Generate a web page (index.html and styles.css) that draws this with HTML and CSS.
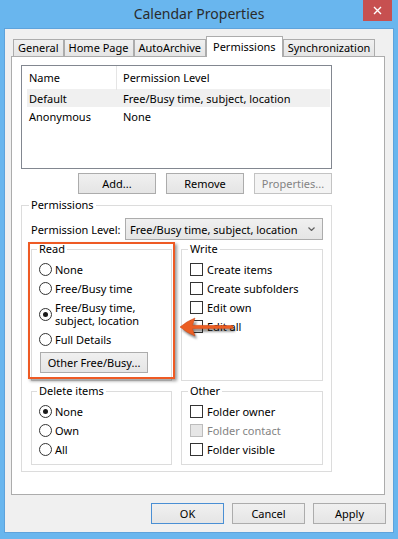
FILE: index.html
```html
<!DOCTYPE html>
<html>
<head>
<meta charset="utf-8">
<title>Calendar Properties</title>
<link rel="stylesheet" href="styles.css">
</head>
<body>
<div class="window">
  <div class="titlebar">
    <div class="title">Calendar Properties</div>
    <div class="close">
      <svg width="9" height="9" viewBox="0 0 9 9"><path d="M1 1 L8 8 M8 1 L1 8" stroke="#fff" stroke-width="1.4" fill="none"/></svg>
    </div>
  </div>
  <div class="client">
    <div class="tabs">
      <div class="tab">General</div>
      <div class="tab">Home Page</div>
      <div class="tab">AutoArchive</div>
      <div class="tab active">Permissions</div>
      <div class="tab">Synchronization</div>
    </div>
    <div class="panel">
      <div class="list">
        <div class="list-head"><div class="c1">Name</div><div class="c2">Permission Level</div></div>
        <div class="list-row selected"><div class="c1">Default</div><div class="c2">Free/Busy time, subject, location</div></div>
        <div class="list-row"><div class="c1">Anonymous</div><div class="c2">None</div></div>
      </div>
      <div class="list-buttons">
        <button class="btn">Add...</button>
        <button class="btn">Remove</button>
        <button class="btn disabled">Properties...</button>
      </div>
      <fieldset class="group perms">
        <legend>Permissions</legend>
        <div class="level-row">
          <div class="level-label">Permission Level:</div>
          <div class="select">
            <span>Free/Busy time, subject, location</span>
            <svg width="7" height="4" viewBox="0 0 7 4"><path d="M0.5 0.5 L3.5 3.5 L6.5 0.5" stroke="#606060" stroke-width="1.2" fill="none"/></svg>
          </div>
        </div>
        <div class="groups">
          <div class="read-wrap">
            <fieldset class="group sub read">
              <legend>Read</legend>
              <div class="items">
                <div class="opt"><span class="radio"></span><span>None</span></div>
                <div class="opt"><span class="radio"></span><span>Free/Busy time</span></div>
                <div class="opt"><span class="radio on"></span><span>Free/Busy time,<br>subject, location</span></div>
                <div class="opt"><span class="radio"></span><span>Full Details</span></div>
                <button class="btn other-btn">Other Free/Busy...</button>
              </div>
            </fieldset>
            <div class="highlight"></div>
          </div>
          <fieldset class="group sub write">
            <legend>Write</legend>
            <div class="items">
              <div class="opt chk"><span class="box"></span><span>Create items</span></div>
              <div class="opt chk"><span class="box"></span><span>Create subfolders</span></div>
              <div class="opt chk"><span class="box"></span><span>Edit own</span></div>
              <div class="opt chk"><span class="box"></span><span>Edit all</span></div>
            </div>
          </fieldset>
          <fieldset class="group sub delete">
            <legend>Delete items</legend>
            <div class="items">
              <div class="opt"><span class="radio on"></span><span>None</span></div>
              <div class="opt"><span class="radio"></span><span>Own</span></div>
              <div class="opt"><span class="radio"></span><span>All</span></div>
            </div>
          </fieldset>
          <fieldset class="group sub other">
            <legend>Other</legend>
            <div class="items">
              <div class="opt chk"><span class="box"></span><span>Folder owner</span></div>
              <div class="opt chk dim"><span class="box disabled"></span><span>Folder contact</span></div>
              <div class="opt chk"><span class="box"></span><span>Folder visible</span></div>
            </div>
          </fieldset>
          <svg class="arrow" width="62" height="28" viewBox="177 313 62 28">
            <defs>
              <filter id="blur" x="-20%" y="-50%" width="140%" height="200%"><feGaussianBlur stdDeviation="1.2"/></filter>
            </defs>
            <path transform="translate(2 3)" filter="url(#blur)" fill="rgba(0,0,0,0.45)" d="M180 327 Q187 321 195 318 L192.5 325.3 L233 325.6 L233 328.6 L192.5 328.8 L195 336 Q187 333 180 327 Z"/>
            <path fill="#eb5e23" stroke="#c84614" stroke-width="0.5" d="M180 327 Q187 321 195 318 L192.5 325.3 L233 325.6 L233 328.6 L192.5 328.8 L195 336 Q187 333 180 327 Z"/>
          </svg>
        </div>
      </fieldset>
    </div>
    <div class="footer">
      <button class="btn default">OK</button>
      <button class="btn">Cancel</button>
      <button class="btn">Apply</button>
    </div>
  </div>
</div>
</body>
</html>
```

FILE: styles.css
```css
* { box-sizing: border-box; }
html, body { margin: 0; padding: 0; }
body {
  width: 398px;
  height: 539px;
  overflow: hidden;
  background: #69b6ee;
  font-family: "Noto Sans", "Open Sans", sans-serif;
  font-size: 11px;
  color: #000;
}
.window {
  width: 398px;
  height: 539px;
  background: #69b6ee;
  display: flex;
  flex-direction: column;
}
.titlebar {
  height: 28px;
  flex: none;
  display: grid;
  grid-template-columns: 1fr auto 1fr;
}
.title {
  grid-column: 2;
  font-size: 14px;
  line-height: 27px;
  color: #2b2b2b;
}
.close {
  grid-column: 3;
  justify-self: end;
  width: 29px;
  height: 21px;
  margin-right: 6px;
  background: #c75050;
  display: flex;
  align-items: center;
  justify-content: center;
}
.client {
  margin-left: 4px;
  width: 390px;
  height: 505px;
  border: 1px solid #5ea3dc;
  background: #f0f0f0;
  padding-top: 7px;
  display: flex;
  flex-direction: column;
}
.tabs {
  display: flex;
  align-items: flex-end;
  height: 21px;
  margin-left: 8px;
}
.tab {
  height: 17px;
  margin-bottom: 1px;
  padding: 0 4px;
  border: 1px solid #acacac;
  border-bottom: none;
  background: linear-gradient(#f0f0f0, #e5e5e5);
  line-height: 16px;
  white-space: nowrap;
}
.tab.active {
  height: 21px;
  margin-bottom: 0;
  padding: 0 6px;
  background: #fff;
  line-height: 19px;
  position: relative;
  z-index: 1;
}
.panel {
  margin: -1px 8px 0 6px;
  background: #fff;
  border: 1px solid #acacac;
  padding: 8px 0 22px 9px;
}
.list {
  width: 311px;
  height: 104px;
  border: 1px solid #828790;
  padding: 0 1px 0 5px;
}
.list-head, .list-row {
  display: grid;
  grid-template-columns: 89px 1fr;
  white-space: nowrap;
}
.list-head { height: 23px; line-height: 24px; }
.list-row { height: 18px; line-height: 19px; }
.list-row.selected { background: #f0f0f0; }
.c1 { padding-left: 2px; }
.list-head .c2 { border-left: 1px solid #e5e5e5; padding-left: 6px; }
.list-row .c2 { padding-left: 7px; }
.list-buttons {
  width: 311px;
  margin-top: 4px;
  display: flex;
  justify-content: flex-end;
  gap: 10px;
}
.btn {
  width: 78px;
  height: 21px;
  padding: 0;
  border: 1px solid #acacac;
  border-radius: 0;
  background: linear-gradient(#f0f0f0, #e5e5e5);
  font: inherit;
  color: #000;
  line-height: 19px;
  text-align: center;
}
.btn.disabled {
  border-color: #c3c3c3;
  background: #f4f4f4;
  color: #838383;
}
.btn.default { border-color: #4a8fd4; }
.group {
  margin: 0;
  min-width: 0;
  border: 1px solid #dcdcdc;
}
.group legend {
  padding: 0 2px;
  margin-left: -2px;
  line-height: 14px;
}
.perms {
  width: 311px;
  margin-top: 4px;
  padding: 6px 8px 6px 9px;
}
.level-row {
  display: flex;
  align-items: center;
  height: 22px;
}
.level-label { width: 94px; }
.select {
  width: 198px;
  height: 22px;
  border: 1px solid #acacac;
  background: linear-gradient(#f0f0f0, #e5e5e5);
  display: flex;
  align-items: center;
  justify-content: space-between;
  padding: 0 7px 0 4px;
}
.groups {
  margin-top: 2px;
  display: grid;
  grid-template-columns: 141px 142px;
  column-gap: 9px;
  row-gap: 3px;
  position: relative;
}
.read-wrap {
  position: relative;
  display: flex;
}
.read-wrap > .group { flex: 1; }
.sub { padding: 7px 4px 7px 8px; }
.read, .delete { padding-left: 7px; }
.delete, .other { padding-bottom: 8px; }
.items {
  display: flex;
  flex-direction: column;
  gap: 6px;
}
.opt {
  display: flex;
  align-items: center;
  gap: 3px;
  line-height: 13px;
  white-space: nowrap;
}
.opt.chk { gap: 4px; }
.opt.dim { color: #838383; }
.radio {
  flex: none;
  width: 13px;
  height: 13px;
  border: 1px solid #333;
  border-radius: 50%;
  background: #fff;
  display: flex;
  align-items: center;
  justify-content: center;
}
.radio.on::after {
  content: "";
  width: 5px;
  height: 5px;
  border-radius: 50%;
  background: #1a1a1a;
}
.box {
  flex: none;
  width: 13px;
  height: 13px;
  border: 1px solid #333;
  background: #fff;
}
.box.disabled {
  border-color: #bcbcbc;
  background: #e6e6e6;
}
.other-btn {
  width: 108px;
  margin-left: 1px;
}
.highlight {
  position: absolute;
  left: -3px;
  right: -3px;
  top: 0;
  bottom: 2px;
  border: 2px solid #ee5a24;
  box-shadow: 2px 2px 3px rgba(0, 0, 0, 0.4);
  pointer-events: none;
}
.arrow {
  position: absolute;
  left: 146px;
  top: 71px;
  overflow: visible;
  pointer-events: none;
}
.footer {
  display: flex;
  justify-content: flex-end;
  gap: 8px;
  margin: 8px 7px 0 0;
}
.footer .btn { width: 73px; }
```
